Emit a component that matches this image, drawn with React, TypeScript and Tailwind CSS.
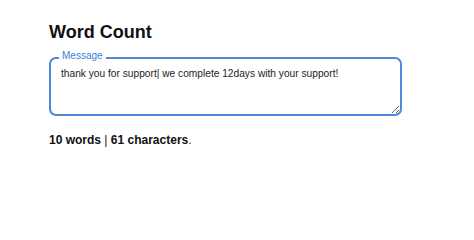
import React from "react";

export default function App() {
  const text = "thank you for support| we complete 12days with your support!";
  return (
    <div className="min-h-[217px] w-[474px] bg-white pl-[49px] pt-[23px] font-['Liberation_Sans',Arial,sans-serif] text-[#111]">
      <h1 className="text-[18px] font-bold leading-[18px]">Word Count</h1>
      <div className="relative mt-[16px] w-[353px]">
        <textarea
          className="block h-[59px] w-full resize-y rounded-[7px] border-2 border-[#4d8ad9] pl-[10px] pr-[10px] pt-[9px] text-[10.2px] leading-[12px] text-[#222] outline-none"
          defaultValue={text}
        />
        <span className="absolute left-[10px] top-[-7px] bg-white px-[3px] text-[10px] leading-[11px] text-[#3d80d6]">
          Message
        </span>
      </div>
      <p className="mt-[17px] text-[12px] leading-[14px]">
        <span className="font-bold">10 words</span> | <span className="font-bold">61 characters</span>.
      </p>
    </div>
  );
}
